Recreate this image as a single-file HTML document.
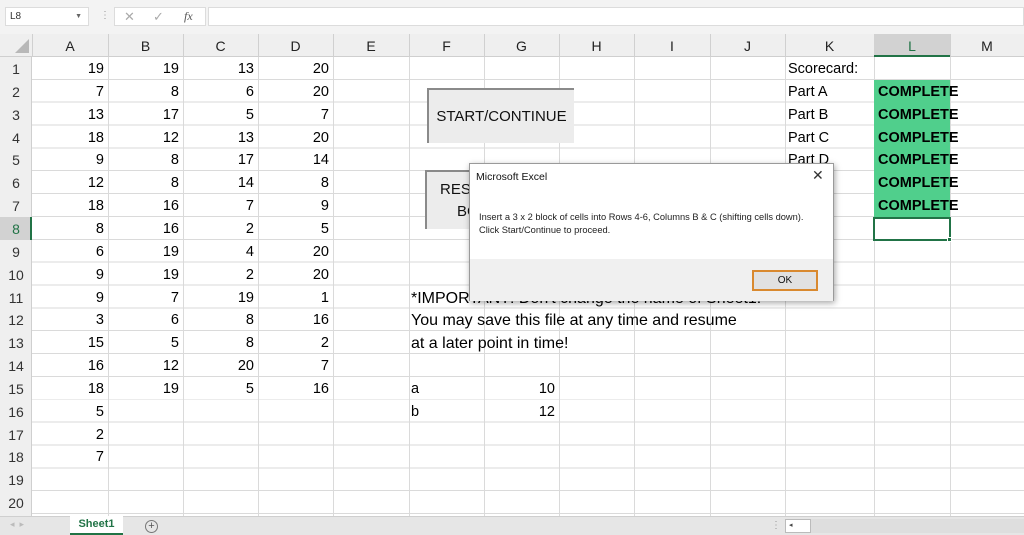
<!DOCTYPE html>
<html><head><meta charset="utf-8"><style>
*{margin:0;padding:0;box-sizing:border-box}
body{width:1024px;height:535px;overflow:hidden;background:#fff;font-family:"Liberation Sans",sans-serif;position:relative}
.abs{position:absolute}
.top{left:0;top:0;width:1024px;height:34px;background:#f3f3f3}
.hdr{left:0;top:34px;width:1024px;height:23px;background:#efefef;border-bottom:1px solid #cfcfcf}
.rh{left:0;top:57px;width:32px;height:460px;background:#efefef;border-right:1px solid #cfcfcf}
.grid{left:32px;top:57px;width:992px;height:460px;background:repeating-linear-gradient(to bottom,transparent 0,transparent 21.85px,#dadada 21.85px,#dadada 22.85px)}
.vl{top:57px;width:1px;height:460px;background:#dadada}
.hv{top:34px;width:1px;height:23px;background:#d0d0d0}
.ch{top:34px;height:23px;line-height:24px;text-align:center;font-size:14px;color:#222}
.row{left:0;width:1024px;height:22.85px;line-height:25px;font-size:14.5px;color:#000}
.row span{position:absolute;top:0}
.n{width:32px;text-align:center;font-size:14px;color:#333;left:0}
.a{left:32px;width:72px;text-align:right}
.b{left:108px;width:71px;text-align:right}
.c{left:183px;width:71px;text-align:right}
.d{left:258px;width:71px;text-align:right}
.k{left:788px}
.g{left:484px;width:71px;text-align:right}
.f{left:411px;white-space:nowrap;font-size:16px}
.lc{left:878px;font-weight:bold;white-space:nowrap}
.btn{background:#ececec;border-left:2px solid #8a8a8a;border-top:2px solid #8a8a8a;font-size:15px;text-align:center;color:#111}
</style></head><body>
<div class="abs top"></div>
<div class="abs" style="left:5px;top:7px;width:84px;height:19px;background:#fff;border:1px solid #dcdcdc;font-size:10px;line-height:17px;padding-left:4px;color:#333">L8<span style="position:absolute;right:6px;font-size:7px;color:#666">▼</span></div>
<div class="abs" style="left:100px;top:10px;font-size:10px;color:#999">⋮</div>
<div class="abs" style="left:114px;top:7px;width:92px;height:19px;background:#fff;border:1px solid #dcdcdc;font-size:13px;color:#aaa;line-height:17px"><span style="position:absolute;left:9px">✕</span><span style="position:absolute;left:38px">✓</span><span style="position:absolute;left:69px;font-family:'Liberation Serif',serif;font-style:italic;color:#555;font-size:12px">fx</span></div>
<div class="abs" style="left:208px;top:7px;width:816px;height:19px;background:#fff;border:1px solid #dcdcdc"></div>
<div class="abs hdr"></div>
<svg class="abs" style="left:14px;top:38px" width="16" height="16"><polygon points="15,1 15,15 1,15" fill="#b8b8b8"/></svg>
<div class="abs rh"></div>
<div class="abs grid"></div>
<div class="abs vl" style="left:108px"></div><div class="abs vl" style="left:183px"></div><div class="abs vl" style="left:258px"></div><div class="abs vl" style="left:333px"></div><div class="abs vl" style="left:409px"></div><div class="abs vl" style="left:484px"></div><div class="abs vl" style="left:559px"></div><div class="abs vl" style="left:634px"></div><div class="abs vl" style="left:710px"></div><div class="abs vl" style="left:785px"></div><div class="abs vl" style="left:874px"></div><div class="abs vl" style="left:950px"></div>
<div class="abs hv" style="left:32px"></div><div class="abs hv" style="left:108px"></div><div class="abs hv" style="left:183px"></div><div class="abs hv" style="left:258px"></div><div class="abs hv" style="left:333px"></div><div class="abs hv" style="left:409px"></div><div class="abs hv" style="left:484px"></div><div class="abs hv" style="left:559px"></div><div class="abs hv" style="left:634px"></div><div class="abs hv" style="left:710px"></div><div class="abs hv" style="left:785px"></div><div class="abs hv" style="left:874px"></div><div class="abs hv" style="left:950px"></div>
<div class="abs" style="left:874px;top:34px;width:76px;height:23px;background:#d2d2d2;border-bottom:2px solid #217346"></div>
<div class="abs" style="left:0;top:217px;width:32px;height:23px;background:#d2d2d2;border-right:2px solid #217346"></div>
<div class="abs ch" style="left:32px;width:76px">A</div><div class="abs ch" style="left:108px;width:75px">B</div><div class="abs ch" style="left:183px;width:75px">C</div><div class="abs ch" style="left:258px;width:75px">D</div><div class="abs ch" style="left:333px;width:76px">E</div><div class="abs ch" style="left:409px;width:75px">F</div><div class="abs ch" style="left:484px;width:75px">G</div><div class="abs ch" style="left:559px;width:75px">H</div><div class="abs ch" style="left:634px;width:76px">I</div><div class="abs ch" style="left:710px;width:75px">J</div><div class="abs ch" style="left:785px;width:89px">K</div><div class="abs ch" style="left:874px;width:76px;color:#217346">L</div><div class="abs ch" style="left:950px;width:74px">M</div>
<div class="abs" style="left:874px;top:80px;width:76px;height:137px;background:#50cf8c"></div>
<div class="abs" style="left:873px;top:217px;width:78px;height:24px;border:2px solid #217346"></div>
<div class="abs" style="left:947px;top:237px;width:5px;height:5px;background:#217346;border:1px solid #fff"></div>

<div class="abs row" style="top:57px"><span class="n">1</span><span class="a">19</span><span class="b">19</span><span class="c">13</span><span class="d">20</span><span class="k">Scorecard:</span></div>
<div class="abs row" style="top:79.85px"><span class="n">2</span><span class="a">7</span><span class="b">8</span><span class="c">6</span><span class="d">20</span><span class="k">Part A</span><span class="lc">COMPLETE</span></div>
<div class="abs row" style="top:102.7px"><span class="n">3</span><span class="a">13</span><span class="b">17</span><span class="c">5</span><span class="d">7</span><span class="k">Part B</span><span class="lc">COMPLETE</span></div>
<div class="abs row" style="top:125.55px"><span class="n">4</span><span class="a">18</span><span class="b">12</span><span class="c">13</span><span class="d">20</span><span class="k">Part C</span><span class="lc">COMPLETE</span></div>
<div class="abs row" style="top:148.4px"><span class="n">5</span><span class="a">9</span><span class="b">8</span><span class="c">17</span><span class="d">14</span><span class="k">Part D</span><span class="lc">COMPLETE</span></div>
<div class="abs row" style="top:171.25px"><span class="n">6</span><span class="a">12</span><span class="b">8</span><span class="c">14</span><span class="d">8</span><span class="lc">COMPLETE</span></div>
<div class="abs row" style="top:194.1px"><span class="n">7</span><span class="a">18</span><span class="b">16</span><span class="c">7</span><span class="d">9</span><span class="lc">COMPLETE</span></div>
<div class="abs row" style="top:216.95px"><span class="n" style="color:#217346">8</span><span class="a">8</span><span class="b">16</span><span class="c">2</span><span class="d">5</span></div>
<div class="abs row" style="top:239.8px"><span class="n">9</span><span class="a">6</span><span class="b">19</span><span class="c">4</span><span class="d">20</span></div>
<div class="abs row" style="top:262.65px"><span class="n">10</span><span class="a">9</span><span class="b">19</span><span class="c">2</span><span class="d">20</span></div>
<div class="abs row" style="top:285.5px"><span class="n">11</span><span class="a">9</span><span class="b">7</span><span class="c">19</span><span class="d">1</span><span class="f">*IMPORTANT! Don't change the name of Sheet1!</span></div>
<div class="abs row" style="top:308.35px"><span class="n">12</span><span class="a">3</span><span class="b">6</span><span class="c">8</span><span class="d">16</span><span class="f">You may save this file at any time and resume</span></div>
<div class="abs row" style="top:331.2px"><span class="n">13</span><span class="a">15</span><span class="b">5</span><span class="c">8</span><span class="d">2</span><span class="f">at a later point in time!</span></div>
<div class="abs row" style="top:354.05px"><span class="n">14</span><span class="a">16</span><span class="b">12</span><span class="c">20</span><span class="d">7</span></div>
<div class="abs row" style="top:376.9px"><span class="n">15</span><span class="a">18</span><span class="b">19</span><span class="c">5</span><span class="d">16</span><span class="f" style="font-size:14.5px">a</span><span class="g">10</span></div>
<div class="abs row" style="top:399.75px"><span class="n">16</span><span class="a">5</span><span class="f" style="font-size:14.5px">b</span><span class="g">12</span></div>
<div class="abs row" style="top:422.6px"><span class="n">17</span><span class="a">2</span></div>
<div class="abs row" style="top:445.45px"><span class="n">18</span><span class="a">7</span></div>
<div class="abs row" style="top:468.3px"><span class="n">19</span></div>
<div class="abs row" style="top:491.15px"><span class="n">20</span></div>

<div class="abs btn" style="left:427px;top:88px;width:147px;height:55px;line-height:53px">START/CONTINUE</div>
<div class="abs btn" style="left:425px;top:170px;width:148px;height:59px"><span class="abs" style="left:13px;top:9px">RESET</span><span class="abs" style="left:30px;top:31px">BOARD</span></div>

<div class="abs" style="left:469px;top:163px;width:365px;height:138px;background:#fff;border:1px solid #9a9a9a;box-shadow:1px 2px 6px rgba(0,0,0,.35)">
<div class="abs" style="left:6px;top:7px;font-size:10.5px;color:#111">Microsoft Excel</div>
<div class="abs" style="left:342px;top:3px;font-size:14px;color:#333">✕</div>
<div class="abs" style="left:9px;top:47px;font-size:9.3px;line-height:13px;color:#222;white-space:nowrap">Insert a 3 x 2 block of cells into Rows 4-6, Columns B &amp; C (shifting cells down).<br>Click Start/Continue to proceed.</div>
<div class="abs" style="left:0;top:95px;width:363px;height:42px;background:#f0f0f0"></div>
<div class="abs" style="left:282px;top:106px;width:66px;height:21px;background:#e1e1e1;border:2px solid #d9892f;font-size:10px;text-align:center;line-height:17px;color:#111">OK</div>
</div>

<div class="abs" style="left:0;top:516px;width:1024px;height:19px;background:#e6e6e6;border-top:1px solid #cfcfcf"></div>
<div class="abs" style="left:10px;top:519px;font-size:9px;color:#bbb">◂ &nbsp;▸</div>
<div class="abs" style="left:70px;top:516px;width:53px;height:19px;background:#fff;border-bottom:2px solid #217346;font-size:11px;font-weight:bold;color:#217346;text-align:center;line-height:17px">Sheet1</div>
<div class="abs" style="left:145px;top:520px;width:13px;height:13px;border:1px solid #777;border-radius:50%;font-size:11px;line-height:11px;text-align:center;color:#555">+</div>
<div class="abs" style="left:771px;top:520px;font-size:10px;color:#999">⋮</div>
<div class="abs" style="left:785px;top:519px;width:239px;height:14px;background:#dedede"></div>
<div class="abs" style="left:785px;top:519px;width:26px;height:14px;background:#fff;border:1px solid #bbb;font-size:7px;line-height:12px;padding-left:3px;color:#444">◂</div>
</body></html>
